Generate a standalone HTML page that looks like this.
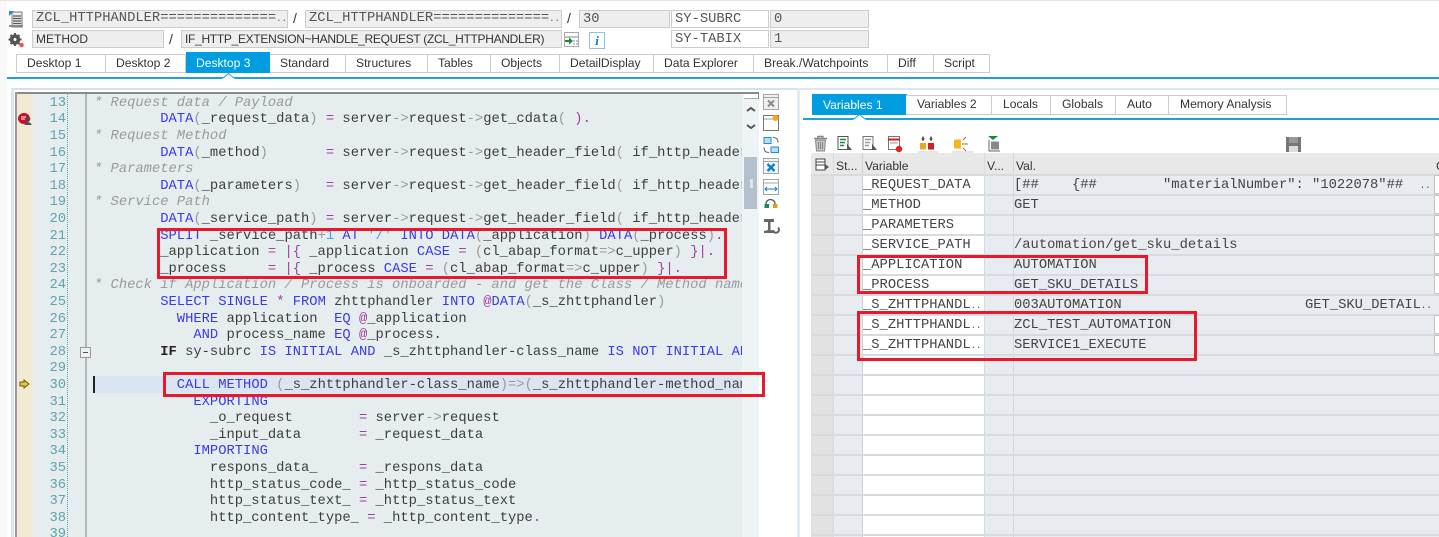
<!DOCTYPE html>
<html><head><meta charset="utf-8"><style>
html,body{margin:0;padding:0;width:1439px;height:537px;overflow:hidden;background:#fff}
#w{position:relative;width:1439px;height:537px;overflow:hidden;filter:blur(.3px);font-family:"Liberation Sans",sans-serif;font-size:12.1px;color:#333}
.a{position:absolute}
.f{position:absolute;height:16px;line-height:16px;background:#eee;border:1px solid #ccc;padding-left:3px;white-space:nowrap;overflow:hidden;box-sizing:content-box}
.m{font-family:"Liberation Mono",monospace;font-size:13.8px;line-height:18px;color:#555}
.wh{background:#fff}
.t{position:absolute;top:54px;height:17px;line-height:17px;background:#fff;border:1px solid #ccc;border-left:0;padding-left:10px;box-sizing:content-box;white-space:nowrap}
.s{color:#fff!important;background:#009de0!important;border-color:#009de0!important}
.n{position:absolute;left:33px;width:33px;text-align:right;font-family:"Liberation Mono",monospace;font-size:13.8px;line-height:16.6px;color:#5fa3ae}
.c{position:absolute;left:94px;width:648px;overflow:hidden;white-space:pre;font-family:"Liberation Mono",monospace;font-size:13.8px;line-height:16.6px;color:#3d3d3d}
.c i{color:#9a9a9a}.c b{font-weight:normal;color:#3a3ae8}.c u{text-decoration:none;color:#a0409c}.c s{text-decoration:none;color:#999}.c em{font-style:normal;color:#4aa0e0}
.r{position:absolute;border:3px solid #e8192c;box-sizing:border-box}
.h{position:absolute;left:811px;width:628px;height:2px;background:#d8dadb}
.v{position:absolute;white-space:pre;font-family:"Liberation Mono",monospace;font-size:13.8px;line-height:20px;color:#444}
.b{position:absolute;left:1434px;width:5px;height:17px;background:#fff;border:1px solid #c4c4c4;border-right:0;box-sizing:content-box}
</style></head><body><div id="w">
<div class="a" style="left:0;top:0;width:1439px;height:1px;background:#e4e4e4"></div>
<div class="a" style="left:0;top:1px;width:7px;height:536px;background:#f9f9f9"></div>

<svg class="a" style="left:9px;top:11px" width="15" height="17" viewBox="0 0 15 17"><rect x="3" y="1" width="10" height="15" fill="#eee" stroke="#777"/><path d="M4 5h8M4 7.5h8M4 10h8M4 12.5h8" stroke="#555" stroke-width="1.2"/><path d="M0 15h14" stroke="#888" stroke-width="2"/><path d="M0 0h5L0 5z" fill="#1d8ed8"/></svg>
<svg class="a" style="left:8px;top:32px" width="16" height="16" viewBox="0 0 16 16"><circle cx="7" cy="7.5" r="3.6" fill="none" stroke="#555" stroke-width="3.4"/><path d="M7 1v13M.5 7.5h13M2.5 3l9 9M11.500 3l-9 9" stroke="#555" stroke-width="2"/><circle cx="7" cy="7.500" r="1.500" fill="#fff"/><circle cx="13.500" cy="13" r="2.300" fill="#e55"/></svg>

<div class="f m" style="left:32px;top:10px;width:251px;line-height:16px">ZCL_HTTPHANDLER==============<span style="font-size:9px">..</span></div>
<div class="a" style="left:293px;top:10px;font-size:14px">/</div>
<div class="f m" style="left:305px;top:10px;width:252px;line-height:16px">ZCL_HTTPHANDLER==============<span style="font-size:9px">..</span></div>
<div class="a" style="left:567px;top:10px;font-size:14px">/</div>
<div class="f m" style="left:579px;top:10px;width:86px">30</div>
<div class="f m wh" style="left:671px;top:10px;width:93px">SY-SUBRC</div>
<div class="f m" style="left:770px;top:10px;width:94px">0</div>

<div class="f" style="left:32px;top:30px;width:127px;font-size:12px">METHOD</div>
<div class="a" style="left:169px;top:31px;font-size:14px">/</div>
<div class="f" style="left:181px;top:30px;width:376px;font-size:12px;letter-spacing:-.3px">IF_HTTP_EXTENSION~HANDLE_REQUEST (ZCL_HTTPHANDLER)</div>
<svg class="a" style="left:564px;top:32px" width="16" height="16" viewBox="0 0 16 16"><rect x=".5" y=".5" width="14" height="14" fill="#fff" stroke="#aaa"/><path d="M1 5h14M9 9h2M12 9h2M9 12h2M12 12h2" stroke="#888" fill="none"/><path d="M1 8h4V5.500l4 3.500-4 3.500V10H1z" fill="#1a8a35"/></svg>
<div class="a" style="left:589px;top:32px;width:14px;height:15px;border:1px solid #8fc0e0;color:#0a76d0;font:italic bold 13px/15px 'Liberation Serif',serif;text-align:center">i</div>
<div class="f m wh" style="left:671px;top:30px;width:93px">SY-TABIX</div>
<div class="f m" style="left:770px;top:30px;width:94px">1</div>

<div class="t" style="left:16px;width:78px;border-left:1px solid #ccc">Desktop 1</div>
<div class="t" style="left:106px;width:69px">Desktop 2</div>
<div class="t s" style="left:186px;width:73px;top:52px;height:19px;line-height:21px">Desktop 3</div>
<div class="t" style="left:270px;width:65px">Standard</div>
<div class="t" style="left:346px;width:71px">Structures</div>
<div class="t" style="left:428px;width:52px">Tables</div>
<div class="t" style="left:491px;width:58px">Objects</div>
<div class="t" style="left:560px;width:83px">DetailDisplay</div>
<div class="t" style="left:654px;width:89px">Data Explorer</div>
<div class="t" style="left:754px;width:123px">Break./Watchpoints</div>
<div class="t" style="left:888px;width:35px">Diff</div>
<div class="t" style="left:934px;width:45px">Script</div>
<div class="a" style="left:7px;top:77px;width:1432px;height:2px;background:#1e9fe0"></div>
<svg class="a" style="left:222px;top:73px" width="13" height="6"><path d="M0 6L6.500 0 13 6z" fill="#fff"/><path d="M1 5L6.500 .5 12 5" stroke="#1e9fe0" fill="none"/></svg>

<!-- panel frames -->
<div class="a" style="left:11px;top:88px;width:787px;height:2px;background:#d3e2ea"></div>
<div class="a" style="left:11px;top:88px;width:3px;height:449px;background:#d9e6ed"></div>
<div class="a" style="left:797px;top:88px;width:3px;height:449px;background:#e0eaf0"></div>
<div class="a" style="left:800px;top:88px;width:639px;height:2px;background:#dde8ee"></div>
<div class="a" style="left:15px;top:92px;width:744px;height:2px;background:#8a8a8a"></div>
<div class="a" style="left:15px;top:92px;width:2px;height:445px;background:#9a9a9a"></div>
<div class="a" style="left:17px;top:94px;width:16px;height:443px;background:#f3ead6"></div>
<div class="a" style="left:33px;top:94px;width:709px;height:443px;background:#e6edef"></div>
<div class="a" style="left:67px;top:94px;height:443px;border-left:1px dotted #5fa3ae"></div>
<div class="a" style="left:85px;top:94px;width:2px;height:443px;background:#b0b6b7"></div>
<div class="a" style="left:742px;top:94px;width:17px;height:443px;background:#eef3f5"></div>
<div class="a" style="left:744px;top:94px;width:15px;height:5px;background:#fff;border-bottom:1px solid #aaa;border-right:1px solid #888;box-sizing:border-box"></div>
<svg class="a" style="left:744px;top:103px" width="14" height="30" viewBox="0 0 14 30"><path d="M3 8l4-3 4 3M3 22l4 3 4-3" stroke="#555" stroke-width="2" fill="none"/></svg>
<div class="a" style="left:744px;top:157px;width:13px;height:52px;background:#b4c0cb"></div>
<div class="a" style="left:750px;top:179px;width:3px;height:9px;background:#dfe5ea"></div>

<!-- line 30 highlight -->
<div class="a" style="left:93px;top:376px;width:649px;height:17px;background:#dbe5f2"></div>
<div class="a" style="left:93px;top:376px;width:2px;height:17px;background:#222"></div>

<!-- line numbers -->
<div class="n" style="top:95.7px">13</div><div class="n" style="top:112.3px">14</div><div class="n" style="top:128.9px">15</div><div class="n" style="top:145.5px">16</div><div class="n" style="top:162.1px">17</div><div class="n" style="top:178.7px">18</div><div class="n" style="top:195.3px">19</div><div class="n" style="top:211.9px">20</div><div class="n" style="top:228.5px">21</div><div class="n" style="top:245.1px">22</div><div class="n" style="top:261.7px">23</div><div class="n" style="top:278.3px">24</div><div class="n" style="top:294.9px">25</div><div class="n" style="top:311.5px">26</div><div class="n" style="top:328.1px">27</div><div class="n" style="top:344.7px">28</div><div class="n" style="top:361.3px">29</div><div class="n" style="top:377.9px">30</div><div class="n" style="top:394.5px">31</div><div class="n" style="top:411.1px">32</div><div class="n" style="top:427.7px">33</div><div class="n" style="top:444.3px">34</div><div class="n" style="top:460.9px">35</div><div class="n" style="top:477.5px">36</div><div class="n" style="top:494.1px">37</div><div class="n" style="top:510.7px">38</div><div class="n" style="top:527.3px">39</div>

<!-- code -->
<div class="c" style="top:95.7px"><i>* Request data / Payload</i></div>
<div class="c" style="top:112.3px">        <b>DATA</b><s>(</s>_request_data<s>)</s> <u>=</u> server<s>-&gt;</s>request<s>-&gt;</s>get_cdata<s>(</s> <u>)</u><u>.</u></div>
<div class="c" style="top:128.9px"><i>* Request Method</i></div>
<div class="c" style="top:145.5px">        <b>DATA</b><s>(</s>_method<s>)</s>       <u>=</u> server<s>-&gt;</s>request<s>-&gt;</s>get_header_field<s>(</s> if_http_header</div>
<div class="c" style="top:162.1px"><i>* Parameters</i></div>
<div class="c" style="top:178.7px">        <b>DATA</b><s>(</s>_parameters<s>)</s>   <u>=</u> server<s>-&gt;</s>request<s>-&gt;</s>get_header_field<s>(</s> if_http_header</div>
<div class="c" style="top:195.3px"><i>* Service Path</i></div>
<div class="c" style="top:211.9px">        <b>DATA</b><s>(</s>_service_path<s>)</s> <u>=</u> server<s>-&gt;</s>request<s>-&gt;</s>get_header_field<s>(</s> if_http_header</div>
<div class="c" style="top:228.5px">        <b>SPLIT</b> _service_path<s>+</s><em>1</em> <b>AT</b> <em>'/'</em> <b>INTO</b> <b>DATA</b><s>(</s>_application<s>)</s> <b>DATA</b><s>(</s>_process<s>)</s><u>.</u></div>
<div class="c" style="top:245.1px">        _application <u>=</u> <u>|{</u> _application <b>CASE</b> <u>=</u> <s>(</s>cl_abap_format<s>=&gt;</s>c_upper<s>)</s> <u>}|.</u></div>
<div class="c" style="top:261.7px">        _process     <u>=</u> <u>|{</u> _process <b>CASE</b> <u>=</u> <s>(</s>cl_abap_format<s>=&gt;</s>c_upper<s>)</s> <u>}|.</u></div>
<div class="c" style="top:278.3px"><i>* Check if Application / Process is onboarded - and get the Class / Method name</i></div>
<div class="c" style="top:294.9px">        <b>SELECT</b> <b>SINGLE</b> <u>*</u> <b>FROM</b> zhttphandler <b>INTO</b> <u>@</u><b>DATA</b><s>(</s>_s_zhttphandler<s>)</s></div>
<div class="c" style="top:311.5px">          <b>WHERE</b> application  <b>EQ</b> <u>@</u>_application</div>
<div class="c" style="top:328.1px">            <b>AND</b> process_name <b>EQ</b> <u>@</u>_process.</div>
<div class="c" style="top:344.7px">        <span style="font-weight:bold;color:#222">IF</span> sy-subrc <b>IS</b> <b>INITIAL</b> <b>AND</b> _s_zhttphandler-class_name <b>IS</b> <b>NOT</b> <b>INITIAL</b> <b>AND</b></div>
<div class="c" style="top:377.9px">          <b>CALL</b> <b>METHOD</b> <s>(</s>_s_zhttphandler-class_name<s>)</s><s>=&gt;</s><s>(</s>_s_zhttphandler-method_name<s>)</s></div>
<div class="c" style="top:394.5px">            <b>EXPORTING</b></div>
<div class="c" style="top:411.1px">              _o_request        <u>=</u> server<s>-&gt;</s>request</div>
<div class="c" style="top:427.7px">              _input_data       <u>=</u> _request_data</div>
<div class="c" style="top:444.3px">            <b>IMPORTING</b></div>
<div class="c" style="top:460.9px">              respons_data_     <u>=</u> _respons_data</div>
<div class="c" style="top:477.5px">              http_status_code_ <u>=</u> _http_status_code</div>
<div class="c" style="top:494.1px">              http_status_text_ <u>=</u> _http_status_text</div>
<div class="c" style="top:510.7px">              http_content_type_ <u>=</u> _http_content_type<u>.</u></div>

<!-- gutter icons -->
<svg class="a" style="left:17px;top:112px" width="16" height="14" viewBox="0 0 16 14"><ellipse cx="7" cy="6.500" rx="6" ry="5.500" fill="#c8102e"/><path d="M4 5h5M4 7h4" stroke="#f8c8c8" stroke-width="1.200"/><circle cx="11" cy="7" r="2.300" fill="#5a4a3a"/><path d="M7.500 13c0-3.500 7-3.500 7 0z" fill="#54466a"/></svg>
<svg class="a" style="left:19px;top:379px" width="11" height="10" viewBox="0 0 11 10"><path d="M1 3h4V1l5 4-5 4V7H1z" fill="#f3c02e" stroke="#6b5a14"/></svg>
<svg class="a" style="left:80px;top:347px" width="11" height="11"><rect x=".5" y=".5" width="10" height="10" fill="#eef1f2" stroke="#999"/><path d="M3 5.500h5" stroke="#555"/></svg>

<!-- side toolbar -->
<svg class="a" style="left:763px;top:94px" width="17" height="146" viewBox="0 0 17 146">
<rect x=".5" y=".5" width="15" height="15" fill="#f0f0f0" stroke="#a5a5a5"/><path d="M1 3.500h14" stroke="#a5a5a5"/><path d="M5 6.500l6 6M11 6.500l-6 6" stroke="#8a8a8a" stroke-width="2"/>
<rect x=".5" y="21.500" width="15" height="15" fill="#fff" stroke="#777"/><path d="M1 25h10" stroke="#999"/><circle cx="12.500" cy="24" r="3" fill="#f3a91d"/>
<rect x="1" y="43.500" width="7" height="6" fill="#bcdcf2" stroke="#1d8ed8"/><rect x="8" y="53" width="7.500" height="5.500" fill="#bcdcf2" stroke="#1d8ed8"/><path d="M10 43.500c3.500 0 5 2 5 5M6 58.500c-3.500 0-5-2-5-5" stroke="#666" fill="none"/>
<rect x=".5" y="64.500" width="15" height="15" fill="#eef4f8" stroke="#a5a5a5"/><path d="M1 67.500h14" stroke="#a5a5a5"/><path d="M4.500 70l7 7M11.500 70l-7 7" stroke="#0a7fd0" stroke-width="2.400"/>
<rect x=".5" y="85.500" width="15" height="15" fill="#fff" stroke="#a5a5a5"/><path d="M1 89h14" stroke="#a5a5a5"/><path d="M2 95h12M4 93l-2 2 2 2M12 93l2 2-2 2" stroke="#0a7fd0" fill="none"/>
<path d="M3 110c0-6 9-6 9 0" stroke="#555" fill="none" stroke-width="1.300"/><rect x="1.500" y="110" width="4.500" height="4" fill="#1a8a55"/><rect x="10" y="110" width="4.500" height="4" fill="#d8a020"/>
<path d="M1 125h10v3H7.500v8l4 1v2H1v-2l4-1v-8H1z" fill="#666"/><path d="M10 136a3 3 0 1 0 5-2.500" stroke="#666" stroke-width="2" fill="none"/>
</svg>

<!-- right tabs -->
<div class="t s" style="left:812px;top:94px;width:83px;height:19px;line-height:20px;padding-left:11px">Variables 1</div>
<div class="t" style="left:906px;top:95px;width:74px;height:18px;line-height:17px;padding-left:11px">Variables 2</div>
<div class="t" style="left:992px;top:95px;width:47px;height:18px;line-height:17px;padding-left:11px">Locals</div>
<div class="t" style="left:1051px;top:95px;width:53px;height:18px;line-height:17px;padding-left:11px">Globals</div>
<div class="t" style="left:1116px;top:95px;width:41px;height:18px;line-height:17px;padding-left:11px">Auto</div>
<div class="t" style="left:1169px;top:95px;width:106px;height:18px;line-height:17px;padding-left:11px">Memory Analysis</div>
<div class="a" style="left:803px;top:118px;width:636px;height:2px;background:#1e9fe0"></div>
<svg class="a" style="left:853px;top:114px" width="13" height="6"><path d="M0 6L6.500 0 13 6z" fill="#fff"/><path d="M1 5L6.500 .5 12 5" stroke="#1e9fe0" fill="none"/></svg>

<!-- right toolbar -->
<svg class="a" style="left:812px;top:134px" width="200" height="20" viewBox="0 0 200 20">
<path d="M2 4.500h13M6 4.500V2.500h5v2" fill="none" stroke="#888" stroke-width="1.500"/><path d="M3.500 6l1 11h8l1-11z" fill="#c4c4c4" stroke="#888"/><path d="M6.500 8v7M8.500 8v7M10.500 8v7" stroke="#888"/>
<rect x="26" y="2.500" width="10" height="13" fill="#fff" stroke="#555"/><path d="M28 5.500h6M28 8.500h5M28 11.500h4" stroke="#1a8a35" stroke-width="1.500"/><path d="M35 10l5 6h-5z" fill="#555"/>
<rect x="51" y="2.500" width="10" height="13" fill="#fff" stroke="#777"/><path d="M53 5.500h6M53 8.500h5M53 11.500h4" stroke="#999" stroke-width="1.500"/><path d="M60 10l5 6h-5z" fill="#555"/>
<rect x="76.500" y="2.500" width="11" height="13" fill="#fff" stroke="#777"/><path d="M76 5.500h12" stroke="#c22" stroke-width="2"/><path d="M78 9h8" stroke="#999"/><circle cx="87" cy="15" r="3.200" fill="#d22"/>
<rect x="108" y="9" width="6" height="6.500" fill="#e8a820"/><rect x="116" y="9" width="6" height="6.500" fill="#d02020"/><path d="M111 2.500v4M119 2.500v4" stroke="#444" stroke-width="1.500"/><path d="M109 4.500l2 2.500 2-2.500M117 4.500l2 2.500 2-2.500" fill="#444"/><path d="M106 18h20" stroke="#ccc"/>
<rect x="142" y="5.500" width="7" height="9" fill="#f3b81f"/><path d="M150 10h6M151 6l3-3M151 14l3 3" stroke="#777"/><path d="M140 18h22" stroke="#ccc"/>
<path d="M176 2h10l-5 4z" fill="#1a8a35"/><rect x="179" y="7.500" width="8" height="8" fill="#888"/><path d="M177 6v11h11" stroke="#666" fill="none"/>
</svg>
<svg class="a" style="left:1286px;top:137px" width="15" height="15" viewBox="0 0 15 15"><rect x="0" y="0" width="15" height="15" fill="#777"/><rect x="3" y="0" width="9" height="6" fill="#999"/><rect x="3" y="9" width="9" height="6" fill="#ddd"/></svg>

<!-- grid -->
<div class="a" style="left:811px;top:153px;width:628px;height:21px;background:#e8e8e8"></div>
<div class="a" style="left:811px;top:174px;width:22px;height:363px;background:#e1e1e1"></div>
<div class="a" style="left:833px;top:174px;width:30px;height:363px;background:#e8ebef"></div>
<div class="a" style="left:862px;top:174px;width:122px;height:363px;background:#fff"></div>
<div class="a" style="left:984px;top:174px;width:455px;height:363px;background:#e8ebef"></div>
<div class="a" style="left:833px;top:153px;width:1px;height:384px;background:#dadada"></div>
<div class="a" style="left:862px;top:153px;width:1px;height:384px;background:#cfd1d1"></div>
<div class="a" style="left:984px;top:153px;width:1px;height:384px;background:#dadada"></div>
<div class="a" style="left:1013px;top:153px;width:1px;height:384px;background:#d5d7d9"></div>
<div class="h" style="top:174px"></div><div class="h" style="top:194px"></div><div class="h" style="top:214px"></div><div class="h" style="top:234px"></div><div class="h" style="top:254px"></div><div class="h" style="top:274px"></div><div class="h" style="top:294px"></div><div class="h" style="top:314px"></div><div class="h" style="top:334px"></div><div class="h" style="top:354px"></div><div class="h" style="top:374px"></div><div class="h" style="top:394px"></div><div class="h" style="top:414px"></div><div class="h" style="top:434px"></div><div class="h" style="top:454px"></div><div class="h" style="top:474px"></div><div class="h" style="top:494px"></div><div class="h" style="top:514px"></div><div class="h" style="top:534px"></div>
<div class="b" style="top:175px"></div><div class="b" style="top:195px"></div><div class="b" style="top:215px"></div><div class="b" style="top:235px"></div><div class="b" style="top:255px"></div><div class="b" style="top:275px"></div><div class="b" style="top:315px"></div><div class="b" style="top:335px"></div>

<svg class="a" style="left:815px;top:158px" width="15" height="14" viewBox="0 0 15 14"><rect x="1" y="1" width="9" height="11" fill="#fff" stroke="#444"/><path d="M1 4h9M1 7h9" stroke="#444"/><path d="M10 6l4 3-4 3z" fill="#555"/></svg>
<div class="a" style="left:836px;top:159px">St...</div>
<div class="a" style="left:865px;top:159px">Variable</div>
<div class="a" style="left:987px;top:159px">V...</div>
<div class="a" style="left:1016px;top:159px">Val.</div>
<div class="a" style="left:1436px;top:159px">C</div>

<div class="v" style="left:863px;top:176px">_REQUEST_DATA</div>
<div class="v" style="left:1014px;top:176px">[##    {##        "materialNumber": "1022078"##  <span style="font-size:9px">..</span></div>
<div class="v" style="left:863px;top:196px">_METHOD</div><div class="v" style="left:1014px;top:196px">GET</div>
<div class="v" style="left:863px;top:216px">_PARAMETERS</div>
<div class="v" style="left:863px;top:236px">_SERVICE_PATH</div><div class="v" style="left:1014px;top:236px">/automation/get_sku_details</div>
<div class="v" style="left:863px;top:256px">_APPLICATION</div><div class="v" style="left:1014px;top:256px">AUTOMATION</div>
<div class="v" style="left:863px;top:276px">_PROCESS</div><div class="v" style="left:1014px;top:276px">GET_SKU_DETAILS</div>
<div class="v" style="left:863px;top:296px">_S_ZHTTPHANDL<span style="font-size:9px">..</span></div><div class="v" style="left:1014px;top:296px">003AUTOMATION</div><div class="v" style="left:1305px;top:296px">GET_SKU_DETAIL<span style="font-size:9px">..</span></div>
<div class="v" style="left:863px;top:316px">_S_ZHTTPHANDL<span style="font-size:9px">..</span></div><div class="v" style="left:1014px;top:316px">ZCL_TEST_AUTOMATION</div>
<div class="v" style="left:863px;top:336px">_S_ZHTTPHANDL<span style="font-size:9px">..</span></div><div class="v" style="left:1014px;top:336px">SERVICE1_EXECUTE</div>

<!-- red boxes -->
<div class="r" style="left:157px;top:228px;width:570px;height:51px"></div>
<div class="r" style="left:163px;top:372px;width:602px;height:25px"></div>
<div class="r" style="left:857px;top:255px;width:291px;height:39px"></div>
<div class="r" style="left:857px;top:311px;width:340px;height:50px"></div>
</div></body></html>
